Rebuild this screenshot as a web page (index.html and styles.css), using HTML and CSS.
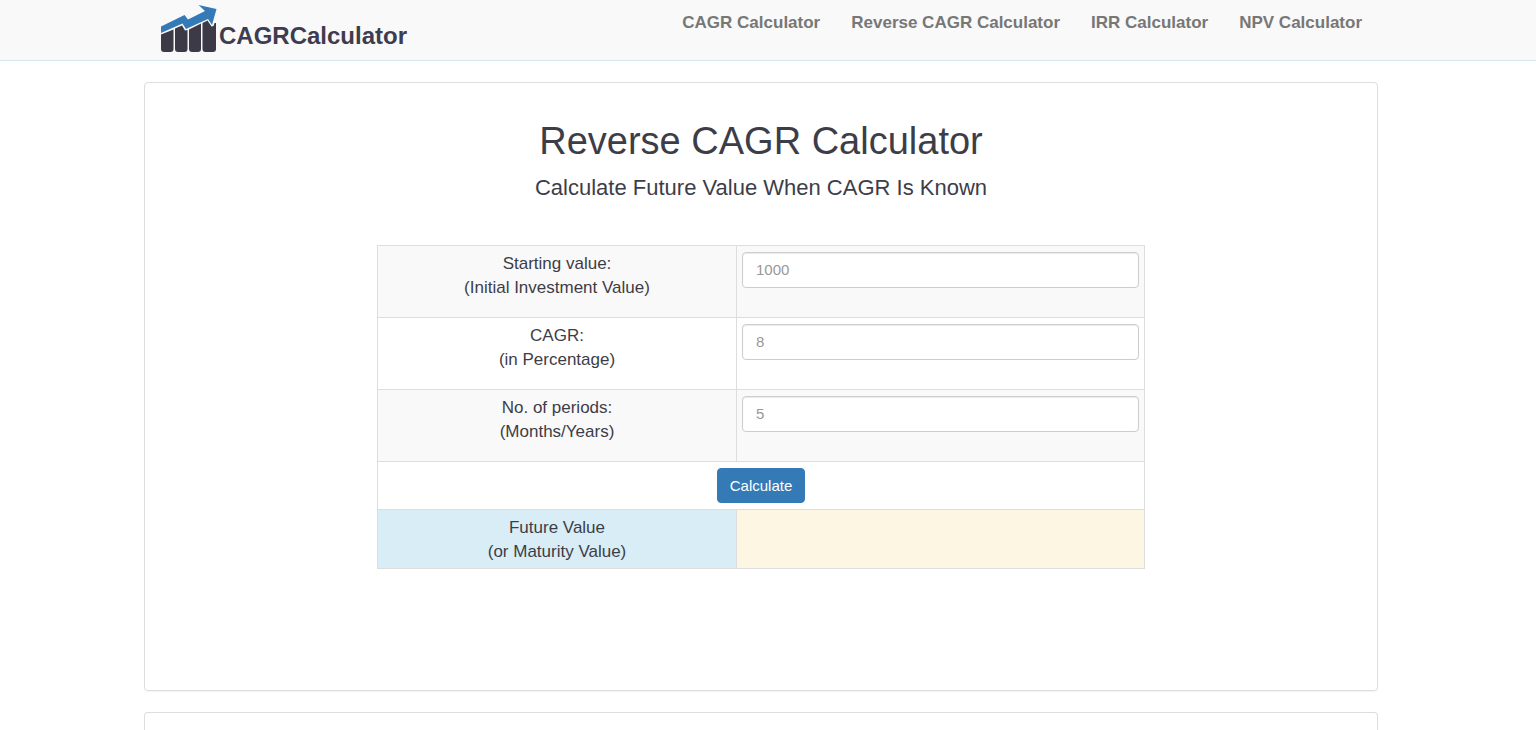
FILE: index.html
```html
<!DOCTYPE html>
<html lang="en">

<head>
  <meta charset="utf-8">
  <meta name="viewport" content="width=device-width, initial-scale=1">
  <title>Reverse CAGR Calculator</title>
  <link rel="stylesheet" href="styles.css">
</head>

<body>
  <header class="navbar">
    <div class="container navbar-inner">
      <a class="brand" href="#">
        <svg class="brand-icon" viewBox="0 0 56 48" aria-hidden="true">
          <g fill="#3d3a48">
            <path d="M0.5 29.5L13 24.5V44Q13 47 10 47H3.5Q0.5 47 0.5 44Z"/>
            <path d="M14.5 23.5L21.5 20.5L24.5 25.5L27 25V44Q27 47 24 47H17.5Q14.5 47 14.5 44Z"/>
            <path d="M28.5 24.5L40.5 18.5V44Q40.5 47 37.5 47H31.5Q28.5 47 28.5 44Z"/>
            <path d="M42 18L47 15.5L51 21.5L53 21L54 18H55.5V44Q55.5 47 52.5 47H45Q42 47 42 44Z"/>
          </g>
          <path d="M0.5 21.5L24 10L27.5 14.5L44.5 6L38 0L56 4L51.5 20L47.5 14L25.5 24L22 18.5L0.5 28Z" fill="#337ab7"/>
        </svg>
        <span>CAGRCalculator</span>
      </a>
      <nav class="nav">
        <a href="#">CAGR Calculator</a>
        <a href="#">Reverse CAGR Calculator</a>
        <a href="#">IRR Calculator</a>
        <a href="#">NPV Calculator</a>
      </nav>
    </div>
  </header>

  <main class="container content">
    <section class="panel">
      <h1>Reverse CAGR Calculator</h1>
      <h2>Calculate Future Value When CAGR Is Known</h2>

      <form>
        <table class="calc-table">
          <tr class="striped">
            <td class="name"><label for="start">Starting value:<br>(Initial Investment Value)</label></td>
            <td><input type="text" id="start" placeholder="1000"></td>
          </tr>
          <tr>
            <td class="name"><label for="cagr">CAGR:<br>(in Percentage)</label></td>
            <td><input type="text" id="cagr" placeholder="8"></td>
          </tr>
          <tr class="striped">
            <td class="name"><label for="periods">No. of periods:<br>(Months/Years)</label></td>
            <td><input type="text" id="periods" placeholder="5"></td>
          </tr>
          <tr>
            <td colspan="2"><button type="button" class="btn">Calculate</button></td>
          </tr>
          <tr>
            <td class="info">Future Value<br>(or Maturity Value)</td>
            <td class="result"></td>
          </tr>
        </table>
      </form>
    </section>

    <section class="panel panel-next"></section>
  </main>
</body>

</html>
```

FILE: styles.css
```css
* {
  box-sizing: border-box;
}

body {
  display: flex;
  flex-direction: column;
  min-height: 100vh;
  margin: 0;
  font-family: "Liberation Sans", Arial, sans-serif;
  font-size: 17px;
  line-height: 24px;
  color: #3d3d48;
  background-color: #fff;
}

/* header */
.navbar {
  padding-right: 14px;
  background-color: #f9f9f9;
  border-bottom: 1px solid #d6e6ee;
}

.container {
  width: 100%;
  max-width: 1234px;
  margin: 0 auto;
}

.navbar-inner {
  display: flex;
  justify-content: space-between;
  min-height: 60px;
  padding: 5px 16px 0;
}

.brand {
  display: flex;
  align-items: flex-end;
  align-self: flex-start;
  gap: 2px;
  font-size: 24px;
  font-weight: bold;
  line-height: 34px;
  color: #3d3d4f;
  text-decoration: none;
}

.brand-icon {
  width: 57px;
  height: 48px;
}

.nav {
  display: flex;
  gap: 31px;
  padding-top: 6px;
}

.nav a {
  font-weight: bold;
  color: #777;
  text-decoration: none;
}

/* panels */
.content {
  display: flex;
  flex: 1;
  flex-direction: column;
  gap: 21px;
  padding-top: 21px;
  max-width: 1248px;
  padding-right: 14px;
}

.panel {
  padding: 36px 16px 121px;
  text-align: center;
  border: 1px solid #ddd;
  border-radius: 4px;
  box-shadow: 0 1px 1px rgba(0, 0, 0, 0.05);
}

.panel-next {
  flex: 1;
  padding: 0;
  border-bottom: none;
  border-radius: 4px 4px 0 0;
}

h1 {
  margin: 0 0 12px;
  font-size: 38px;
  font-weight: normal;
  line-height: 44px;
}

h2 {
  margin: 0 0 44px;
  font-size: 22px;
  font-weight: normal;
  line-height: 26px;
}

/* calculator */
.calc-table {
  width: 64%;
  margin: 0 auto;
  table-layout: fixed;
  border-collapse: collapse;
}

.calc-table td {
  padding: 6px 5px;
  vertical-align: top;
  border: 1px solid #ddd;
}

.calc-table .name {
  width: 359px;
}

.striped {
  background-color: #f9f9f9;
}

.calc-table input {
  display: block;
  width: 100%;
  height: 36px;
  margin-bottom: 23px;
  padding: 0 13px 2px;
  font-family: inherit;
  font-size: 15px;
  color: #555;
  background-color: #fff;
  border: 1px solid #ccc;
  border-radius: 4px;
  box-shadow: inset 0 1px 1px rgba(0, 0, 0, 0.08);
}

.calc-table input::placeholder {
  color: #999;
}

.btn {
  display: block;
  height: 35px;
  margin: 0 auto;
  padding: 0 12px;
  font-family: inherit;
  font-size: 15px;
  color: #fff;
  background-color: #337ab7;
  border: 1px solid #337ab7;
  border-radius: 4px;
}

.calc-table .info {
  padding-bottom: 4px;
  background-color: #d9edf7;
}

.result {
  background-color: #fdf6e3;
}
```
